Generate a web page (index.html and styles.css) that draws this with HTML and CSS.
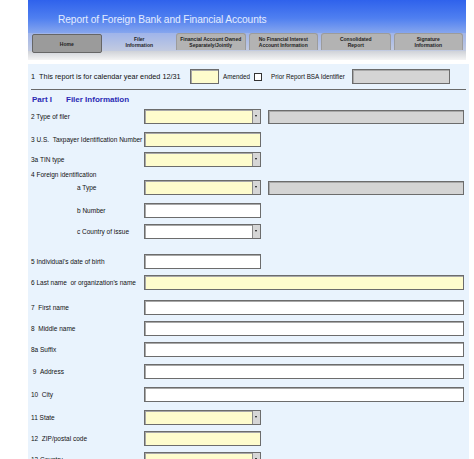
FILE: index.html
```html
<!DOCTYPE html>
<html lang="en">
<head>
    <meta charset="UTF-8">
    <title>Report of Foreign Bank and Financial Accounts</title>
    <link rel="stylesheet" href="styles.css">
</head>
<body>
    <div class="page">
        <div class="header">
            <div class="title">Report of Foreign Bank and Financial Accounts</div>
        </div>
        <div class="tabs">
            <div class="tab home">Home</div>
            <div class="tab current">Filer<br>Information</div>
            <div class="tab">Financial Account Owned<br>Separately/Jointly</div>
            <div class="tab">No Financial Interest<br>Account Information</div>
            <div class="tab">Consolidated<br>Report</div>
            <div class="tab">Signature<br>Information</div>
        </div>
        <div class="subbar"></div>

        <div class="panel">
            <div class="top-row">
                <span class="label-lg">1 &nbsp;This report is for calendar year ended 12/31</span>
                <span class="field yellow year"></span>
                <span class="label-sm amended">Amended</span>
                <span class="checkbox"></span>
                <span class="label-sm prior">Prior Report BSA Identifier</span>
                <span class="field gray prior-id"></span>
            </div>
            <div class="separator"></div>

            <div class="part">
                <span class="part-no">Part I</span>
                <span>Filer Information</span>
            </div>

            <div class="row first">
                <span class="label">2 Type of filer</span>
                <span class="field yellow short select"><i class="arrow"></i></span>
                <span class="field gray side"></span>
            </div>
            <div class="row sp-md">
                <span class="label">3 U.S. &nbsp;Taxpayer Identification Number</span>
                <span class="field yellow short"></span>
            </div>
            <div class="row sp-xs">
                <span class="label">3a TIN type</span>
                <span class="field yellow short select"><i class="arrow"></i></span>
            </div>
            <div class="row label-only">
                <span class="label">4 Foreign identification</span>
            </div>
            <div class="row sp-none">
                <span class="label sub">a Type</span>
                <span class="field yellow short select"><i class="arrow"></i></span>
                <span class="field gray side"></span>
            </div>
            <div class="row sp-md">
                <span class="label sub">b Number</span>
                <span class="field short"></span>
            </div>
            <div class="row sp-sm">
                <span class="label sub">c Country of issue</span>
                <span class="field short select"><i class="arrow"></i></span>
            </div>
            <div class="row sp-lg">
                <span class="label">5 Individual's date of birth</span>
                <span class="field short"></span>
            </div>
            <div class="row sp-sm">
                <span class="label">6 Last name &nbsp;or organization's name</span>
                <span class="field yellow long"></span>
            </div>
            <div class="row sp-tall">
                <span class="label">7 &nbsp;First name</span>
                <span class="field long"></span>
            </div>
            <div class="row sp-sm">
                <span class="label">8 &nbsp;Middle name</span>
                <span class="field long"></span>
            </div>
            <div class="row sp-sm">
                <span class="label">8a Suffix</span>
                <span class="field long"></span>
            </div>
            <div class="row">
                <span class="label">&nbsp;9 &nbsp;Address</span>
                <span class="field long"></span>
            </div>
            <div class="row sp-md">
                <span class="label">10 &nbsp;City</span>
                <span class="field long"></span>
            </div>
            <div class="row sp-md">
                <span class="label">11 State</span>
                <span class="field yellow short select"><i class="arrow"></i></span>
            </div>
            <div class="row sp-sm">
                <span class="label">12 &nbsp;ZIP/postal code</span>
                <span class="field yellow short"></span>
            </div>
            <div class="row sp-sm">
                <span class="label">13 Country</span>
                <span class="field yellow short select"><i class="arrow"></i></span>
            </div>
        </div>
    </div>
</body>
</html>
```

FILE: styles.css
```css
* {
    margin: 0;
    padding: 0;
    box-sizing: border-box;
}

body {
    font-family: 'Liberation Sans', Arial, sans-serif;
    background: white;
    overflow: hidden;
}

.page {
    margin-left: 28px;
    width: 441px;
}

.header {
    height: 33px;
    width: 438px;
    background: linear-gradient(180deg, #2f62ec 0%, #4f7ff0 55%, #86a6ee 100%);
    padding: 14px 0 0 30px;
}

.title {
    color: #e4ecff;
    font-size: 10.2px;
    letter-spacing: -0.1px;
}

.tabs {
    display: flex;
    align-items: flex-start;
    height: 18px;
    width: 438px;
    background: linear-gradient(180deg, #9fb4ea 0%, #c3cbe0 100%);
    padding-left: 4px;
}

.tab {
    width: 70px;
    height: 17px;
    margin-right: 3px;
    background: #b3b3b3;
    border-radius: 3px 3px 0 0;
    border: 1px solid #9c9c9c;
    border-bottom: none;
    font-size: 5px;
    font-weight: bold;
    color: #1e1e1e;
    text-align: center;
    line-height: 6px;
    padding-top: 2px;
}

.tab.home {
    height: 19px;
    margin-top: 1px;
    background: #9b9b9b;
    border: 1px solid #666;
    border-radius: 2px;
    padding-top: 6px;
    margin-right: 4px;
}

.tab.current {
    background: transparent;
    border: none;
    width: 68px;
    padding-top: 3px;
}

.subbar {
    height: 9px;
    width: 438px;
    background: linear-gradient(180deg, #cfd2d8 0%, #f4f4f4 100%);
}

.panel {
    margin-top: 4px;
    background: #e9f3fd;
    height: 420px;
    padding-left: 3px;
}

.top-row {
    display: flex;
    align-items: center;
    height: 25px;
}

.label-lg {
    font-size: 7.3px;
    color: #111;
    width: 159px;
}

.label-sm {
    font-size: 6.3px;
    color: #111;
}

.amended {
    margin-left: 4px;
}

.checkbox {
    width: 8px;
    height: 8px;
    border: 1px solid #333;
    background: white;
    margin-left: 4px;
}

.prior {
    margin-left: 9px;
}

.year {
    width: 29px;
    height: 14px;
}

.prior-id {
    width: 98px;
    height: 13px;
    margin-left: 7px;
}

.separator {
    width: 435px;
    height: 1px;
    background: #6a6a6a;
}

.part {
    display: flex;
    height: 19px;
    align-items: center;
    padding-left: 1px;
    font-size: 8px;
    font-weight: bold;
    color: #2a2ab4;
}

.part-no {
    width: 34px;
}

.row {
    display: flex;
    align-items: center;
    height: 15px;
    margin-top: 7px;
}

.row.first {
    margin-top: 0;
}

.row.sp-none {
    margin-top: 0;
}

.row.sp-xs {
    margin-top: 5px;
}

.row.sp-sm {
    margin-top: 6px;
}

.row.sp-md {
    margin-top: 8px;
}

.row.sp-tall {
    margin-top: 10px;
}

.row.sp-lg {
    margin-top: 15px;
}

.row.label-only {
    margin-top: 1px;
    height: 12px;
}

.label {
    width: 113px;
    font-size: 6.5px;
    color: #111;
    white-space: nowrap;
}

.label.sub {
    padding-left: 46px;
}

.field {
    position: relative;
    height: 15px;
    background: white;
    border: 1px solid #6c6c6c;
    box-shadow: inset 1px 1px 0 #a8a8a8;
}

.field.yellow {
    background: #fefccd;
}

.field.gray {
    background: #d4d4d4;
}

.field.short {
    width: 117px;
}

.field.long {
    width: 320px;
}

.field.side {
    width: 196px;
    height: 14px;
    margin-left: 7px;
}

.arrow {
    position: absolute;
    right: 0;
    top: 0;
    bottom: 0;
    width: 8px;
    background: #d6d6d6;
    border-left: 1px solid #8a8a8a;
}

.arrow::after {
    content: "";
    position: absolute;
    left: 2px;
    top: 5px;
    border-left: 1.5px solid transparent;
    border-right: 1.5px solid transparent;
    border-top: 2px solid #111;
}
```
